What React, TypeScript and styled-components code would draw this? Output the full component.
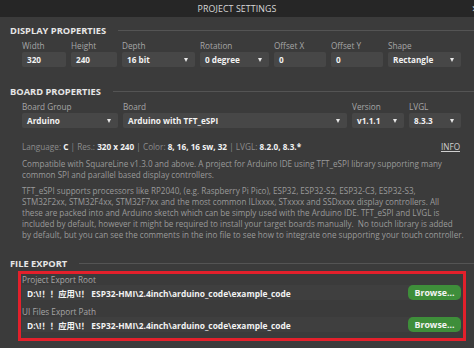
import styled, { createGlobalStyle } from "styled-components";

const GlobalStyle = createGlobalStyle`
  html, body {
    margin: 0;
    padding: 0;
    background: #3b3b3b;
    overflow: hidden;
  }
  body {
    font-family: "Open Sans", "Noto Sans CJK SC", sans-serif;
  }
`;

type FieldDef = { label: string; value: string; width: number; select?: boolean };

const displayFields: FieldDef[] = [
  { label: "Width", value: "320", width: 44 },
  { label: "Height", value: "240", width: 46 },
  { label: "Depth", value: "16 bit", width: 73, select: true },
  { label: "Rotation", value: "0 degree", width: 69, select: true },
  { label: "Offset X", value: "0", width: 52 },
  { label: "Offset Y", value: "0", width: 52 },
  { label: "Shape", value: "Rectangle", width: 73, select: true },
];

const boardFields: FieldDef[] = [
  { label: "Board Group", value: "Arduino", width: 96, select: true },
  { label: "Board", value: "Arduino with TFT_eSPI", width: 224, select: true },
  { label: "Version", value: "v1.1.1", width: 52, select: true },
  { label: "LVGL", value: "8.3.3", width: 52, select: true },
];

const intro = [
  "Compatible with SquareLine v1.3.0 and above. A project for Arduino IDE using TFT_eSPI library supporting many",
  "common SPI and parallel based display controllers.",
];

const details = [
  "TFT_eSPI supports processors like RP2040, (e.g. Raspberry Pi Pico), ESP32, ESP32-S2, ESP32-C3, ESP32-S3,",
  "STM32F2xx, STM32F4xx, STM32F7xx and the most common ILIxxxx, STxxxx and SSDxxxx display controllers. All",
  "these are packed into and Arduino sketch which can be simply used with the Arduino IDE. TFT_eSPI and LVGL is",
  "included by default, however it might be required to install your target boards manually.  No touch library is added",
  "by default, but you can see the comments in the ino file to see how to integrate one supporting your touch controller.",
];

const exportPath = "D:\\!！！应用\\!！ ESP32-HMI\\2.4inch\\arduino_code\\example_code";

const App = () => {
  return (
    <Window>
      <GlobalStyle />
      <TitleBar>
        <span />
        <Title>PROJECT SETTINGS</Title>
        <Close>✕</Close>
      </TitleBar>
      <Body>
        <SectionHeader $top={7}>
          <SectionTitle>DISPLAY PROPERTIES</SectionTitle>
          <Rule />
        </SectionHeader>
        <FieldRow>
          {displayFields.map((f) => (
            <Field key={f.label} $width={f.width}>
              <Label>{f.label}</Label>
              <ValueBox>
                <span>{f.value}</span>
                {f.select && <Caret />}
              </ValueBox>
            </Field>
          ))}
        </FieldRow>

        <SectionHeader $top={18}>
          <SectionTitle>BOARD PROPERTIES</SectionTitle>
          <Rule />
        </SectionHeader>
        <FieldRow>
          {boardFields.map((f) => (
            <Field key={f.label} $width={f.width}>
              <Label>{f.label}</Label>
              <ValueBox>
                <span>{f.value}</span>
                {f.select && <Caret />}
              </ValueBox>
            </Field>
          ))}
        </FieldRow>

        <InfoLine>
          <Specs>
            Language: <b>C</b> | Res.: <b>320 x 240</b> | Color: <b>8, 16, 16 sw, 32</b> | LVGL:{" "}
            <b>8.2.0, 8.3.*</b>
          </Specs>
          <InfoLink>INFO</InfoLink>
        </InfoLine>

        <Paragraph $top={6}>
          {intro.map((l) => (
            <Line key={l}>{l}</Line>
          ))}
        </Paragraph>
        <Paragraph $top={5}>
          {details.map((l) => (
            <Line key={l}>{l}</Line>
          ))}
        </Paragraph>

        <SectionHeader $top={17}>
          <SectionTitle>FILE EXPORT</SectionTitle>
          <Rule />
        </SectionHeader>

        <ExportBox>
          <ExportRow>
            <Label>Project Export Root</Label>
            <PathRow>
              <Path>{exportPath}</Path>
              <BrowseButton>Browse...</BrowseButton>
            </PathRow>
          </ExportRow>
          <ExportRow>
            <Label>UI Files Export Path</Label>
            <PathRow>
              <Path>{exportPath}</Path>
              <BrowseButton>Browse...</BrowseButton>
            </PathRow>
          </ExportRow>
        </ExportBox>
      </Body>
    </Window>
  );
};

const Window = styled.div`
  width: 474px;
  height: 348px;
  display: flex;
  flex-direction: column;
  background: #3b3b3b;
  overflow: hidden;
`;

const TitleBar = styled.div`
  height: 17px;
  flex-shrink: 0;
  display: grid;
  grid-template-columns: 1fr auto 1fr;
  align-items: center;
  background: #262626;
`;

const Title = styled.div`
  color: #d8d8d8;
  font-size: 8.8px;
  letter-spacing: 0.1px;
`;

const Close = styled.div`
  justify-self: end;
  margin-right: -5px;
  color: #cfcfcf;
  font-size: 9px;
  font-family: "DejaVu Sans", sans-serif;
`;

const Body = styled.div`
  display: flex;
  flex-direction: column;
  padding: 0 0 0 10px;
`;

const SectionHeader = styled.div<{ $top: number }>`
  display: flex;
  align-items: center;
  gap: 12px;
  height: 12px;
  margin-top: ${({ $top }) => $top}px;
`;

const SectionTitle = styled.div`
  color: #e6e6e6;
  font-size: 9.3px;
  font-weight: 700;
  white-space: nowrap;
`;

const Rule = styled.div`
  flex: 1;
  height: 1px;
  background: #545454;
`;

const FieldRow = styled.div`
  display: flex;
  gap: 5px;
  padding-left: 12px;
  margin-top: 5px;
`;

const Field = styled.div<{ $width: number }>`
  width: ${({ $width }) => $width}px;
  display: flex;
  flex-direction: column;
  gap: 1px;
`;

const Label = styled.div`
  color: #a6a6a6;
  font-size: 8.2px;
  line-height: 10px;
  white-space: nowrap;
`;

const ValueBox = styled.div`
  height: 15px;
  display: flex;
  align-items: center;
  justify-content: space-between;
  padding: 0 7px 0 5px;
  background: #474747;
  border-radius: 2px;
  color: #f2f2f2;
  font-size: 8.2px;
  font-weight: 700;
  white-space: nowrap;
  overflow: hidden;
`;

const Caret = styled.span`
  width: 0;
  height: 0;
  border-left: 2.5px solid transparent;
  border-right: 2.5px solid transparent;
  border-top: 4px solid #e8e8e8;
`;

const InfoLine = styled.div`
  display: flex;
  justify-content: space-between;
  align-items: center;
  margin-top: 13px;
  padding: 0 14px 0 12px;
  line-height: 11px;
  font-size: 8.2px;
`;

const Specs = styled.div`
  color: #8c8c8c;
  white-space: nowrap;

  b {
    color: #f2f2f2;
    font-weight: 700;
  }
`;

const InfoLink = styled.div`
  color: #cfcfcf;
  text-decoration: underline;
`;

const Paragraph = styled.div<{ $top: number }>`
  margin-top: ${({ $top }) => $top}px;
  padding-left: 12px;
  color: #9a9a9a;
  font-size: 8.1px;
  line-height: 11px;
`;

const Line = styled.div`
  white-space: pre;
`;

const ExportBox = styled.div`
  margin: 2px 8px 0 8px;
  border: 3px solid #e3202b;
  padding: 1px 2px 6px 1px;
  display: flex;
  flex-direction: column;
  gap: 7px;
`;

const ExportRow = styled.div`
  display: flex;
  flex-direction: column;
`;

const PathRow = styled.div`
  display: flex;
  align-items: center;
  justify-content: space-between;
  padding-left: 5px;
  background: #3f3f3f;
`;

const Path = styled.div`
  color: #f2f2f2;
  font-size: 8.4px;
  font-weight: 700;
  white-space: nowrap;
`;

const BrowseButton = styled.button`
  height: 15px;
  width: 53px;
  padding: 0;
  border: none;
  border-radius: 5px;
  background: #3e8e3a;
  color: #f4f4f4;
  font-family: "Open Sans", sans-serif;
  font-size: 8.8px;
  font-weight: 700;
`;

export default App;
